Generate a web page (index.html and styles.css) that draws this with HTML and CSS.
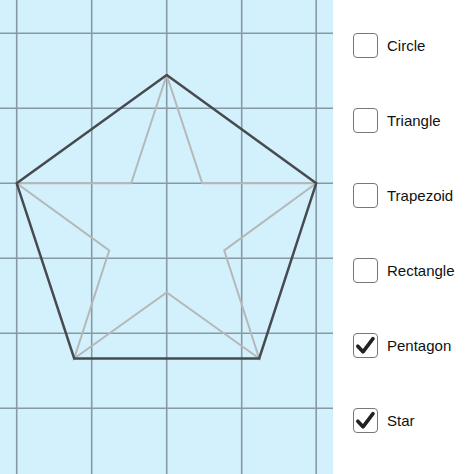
FILE: index.html
```html
<!DOCTYPE html>
<html>
<head>
<meta charset="utf-8">
<link rel="stylesheet" href="styles.css">
</head>
<body>
<div class="app">
  <div class="canvas">
    <svg width="333" height="474" viewBox="0 0 333 474">
      <rect x="0" y="0" width="333" height="474" fill="#d3f1fd"/>
      <g stroke="#879aa3" stroke-width="1.6">
        <line x1="16.7" y1="0" x2="16.7" y2="474"/>
        <line x1="91.7" y1="0" x2="91.7" y2="474"/>
        <line x1="166.7" y1="0" x2="166.7" y2="474"/>
        <line x1="241.7" y1="0" x2="241.7" y2="474"/>
        <line x1="316.2" y1="0" x2="316.2" y2="474"/>
        <line x1="0" y1="33.3" x2="333" y2="33.3"/>
        <line x1="0" y1="108.3" x2="333" y2="108.3"/>
        <line x1="0" y1="183.3" x2="333" y2="183.3"/>
        <line x1="0" y1="258.3" x2="333" y2="258.3"/>
        <line x1="0" y1="333.3" x2="333" y2="333.3"/>
        <line x1="0" y1="408.3" x2="333" y2="408.3"/>
      </g>
      <polygon fill="none" stroke="#b5b8b8" stroke-width="2" stroke-linejoin="miter"
        points="166.7,75 202.2,183.3 316.2,183.3 224.2,250.5 259.2,358.5 166.7,292.5 74.2,358.5 109.2,250.5 16.7,183.3 131.2,183.3"/>
      <polygon fill="none" stroke="#474b50" stroke-width="2.5" stroke-linejoin="miter"
        points="166.7,75 316.2,183.3 259.2,358.5 74.2,358.5 16.7,183.3"/>
    </svg>
  </div>
  <div class="panel">
    <div class="row"><span class="box"></span><span class="label">Circle</span></div>
    <div class="row"><span class="box"></span><span class="label">Triangle</span></div>
    <div class="row"><span class="box"></span><span class="label">Trapezoid</span></div>
    <div class="row"><span class="box"></span><span class="label">Rectangle</span></div>
    <div class="row"><span class="box"><svg width="23" height="23" viewBox="0 0 23 23"><path d="M3.8 12.2 L9 17.8 L19 4.6" fill="none" stroke="#222222" stroke-width="3.6" stroke-linecap="round" stroke-linejoin="round"/></svg></span><span class="label">Pentagon</span></div>
    <div class="row"><span class="box"><svg width="23" height="23" viewBox="0 0 23 23"><path d="M3.8 12.2 L9 17.8 L19 4.6" fill="none" stroke="#222222" stroke-width="3.6" stroke-linecap="round" stroke-linejoin="round"/></svg></span><span class="label">Star</span></div>
  </div>
</div>
</body>
</html>
```
FILE: styles.css
```css
html, body {
  margin: 0;
  padding: 0;
  background: #ffffff;
  width: 474px;
  height: 474px;
  overflow: hidden;
}
.app {
  display: flex;
  flex-direction: row;
  height: 474px;
}
.canvas {
  width: 333px;
  height: 474px;
  flex: none;
}
.canvas svg {
  display: block;
}
.panel {
  display: flex;
  flex-direction: column;
  padding-top: 8px;
  padding-left: 20px;
}
.row {
  height: 75px;
  display: flex;
  align-items: center;
  gap: 9px;
}
.box {
  width: 23px;
  height: 23px;
  border: 1.5px solid #777777;
  border-radius: 4px;
  background: #ffffff;
  display: flex;
  align-items: center;
  justify-content: center;
  flex: none;
}
.box svg {
  display: block;
}
.label {
  font-family: "Liberation Sans", Arial, sans-serif;
  font-size: 15px;
  color: #111111;
}
```
